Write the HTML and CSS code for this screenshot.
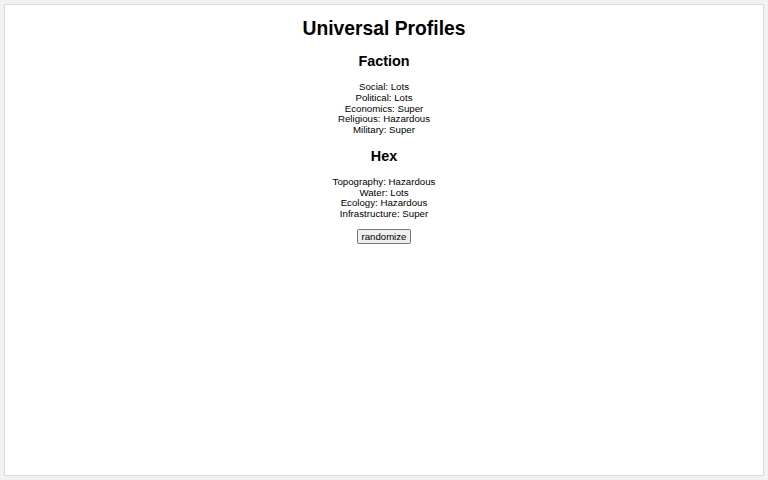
FILE: index.html
```html
<!DOCTYPE html>
<html>
<head>
<meta charset="utf-8">
<link rel="stylesheet" href="styles.css">
</head>
<body>
<div class="frame">
  <h1 class="title">Universal Profiles</h1>
  <h2 class="section">Faction</h2>
  <div class="list">
    <div>Social: Lots</div>
    <div>Political: Lots</div>
    <div>Economics: Super</div>
    <div>Religious: Hazardous</div>
    <div>Military: Super</div>
  </div>
  <h2 class="section">Hex</h2>
  <div class="list">
    <div>Topography: Hazardous</div>
    <div>Water: Lots</div>
    <div>Ecology: Hazardous</div>
    <div>Infrastructure: Super</div>
  </div>
  <div class="actions"><button class="btn">randomize</button></div>
</div>
</body>
</html>
```
FILE: styles.css
```css
html, body {
  margin: 0;
  padding: 0;
  height: 100%;
}
body {
  background: #f2f2f2;
  padding: 4px;
  box-sizing: border-box;
  font-family: "Liberation Sans", Arial, sans-serif;
  color: #000;
}
.frame {
  background: #fff;
  border: 1px solid #dcdcdc;
  height: 100%;
  box-sizing: border-box;
  text-align: center;
  padding-top: 13px;
}
.title {
  font-size: 19.3px;
  font-weight: bold;
  margin: 0 0 13px;
}
.section {
  font-size: 14.4px;
  font-weight: bold;
  margin: 0 0 13px;
}
.list {
  font-size: 9.7px;
  line-height: 10.75px;
  margin-bottom: 12px;
}
.actions {
  margin-top: -6px;
}
.btn {
  font-family: "Liberation Sans", Arial, sans-serif;
  font-size: 9.6px;
  padding: 1px 4px;
  border: 1px solid #767676;
  border-radius: 2px;
  background: #efefef;
  color: #000;
}
```
